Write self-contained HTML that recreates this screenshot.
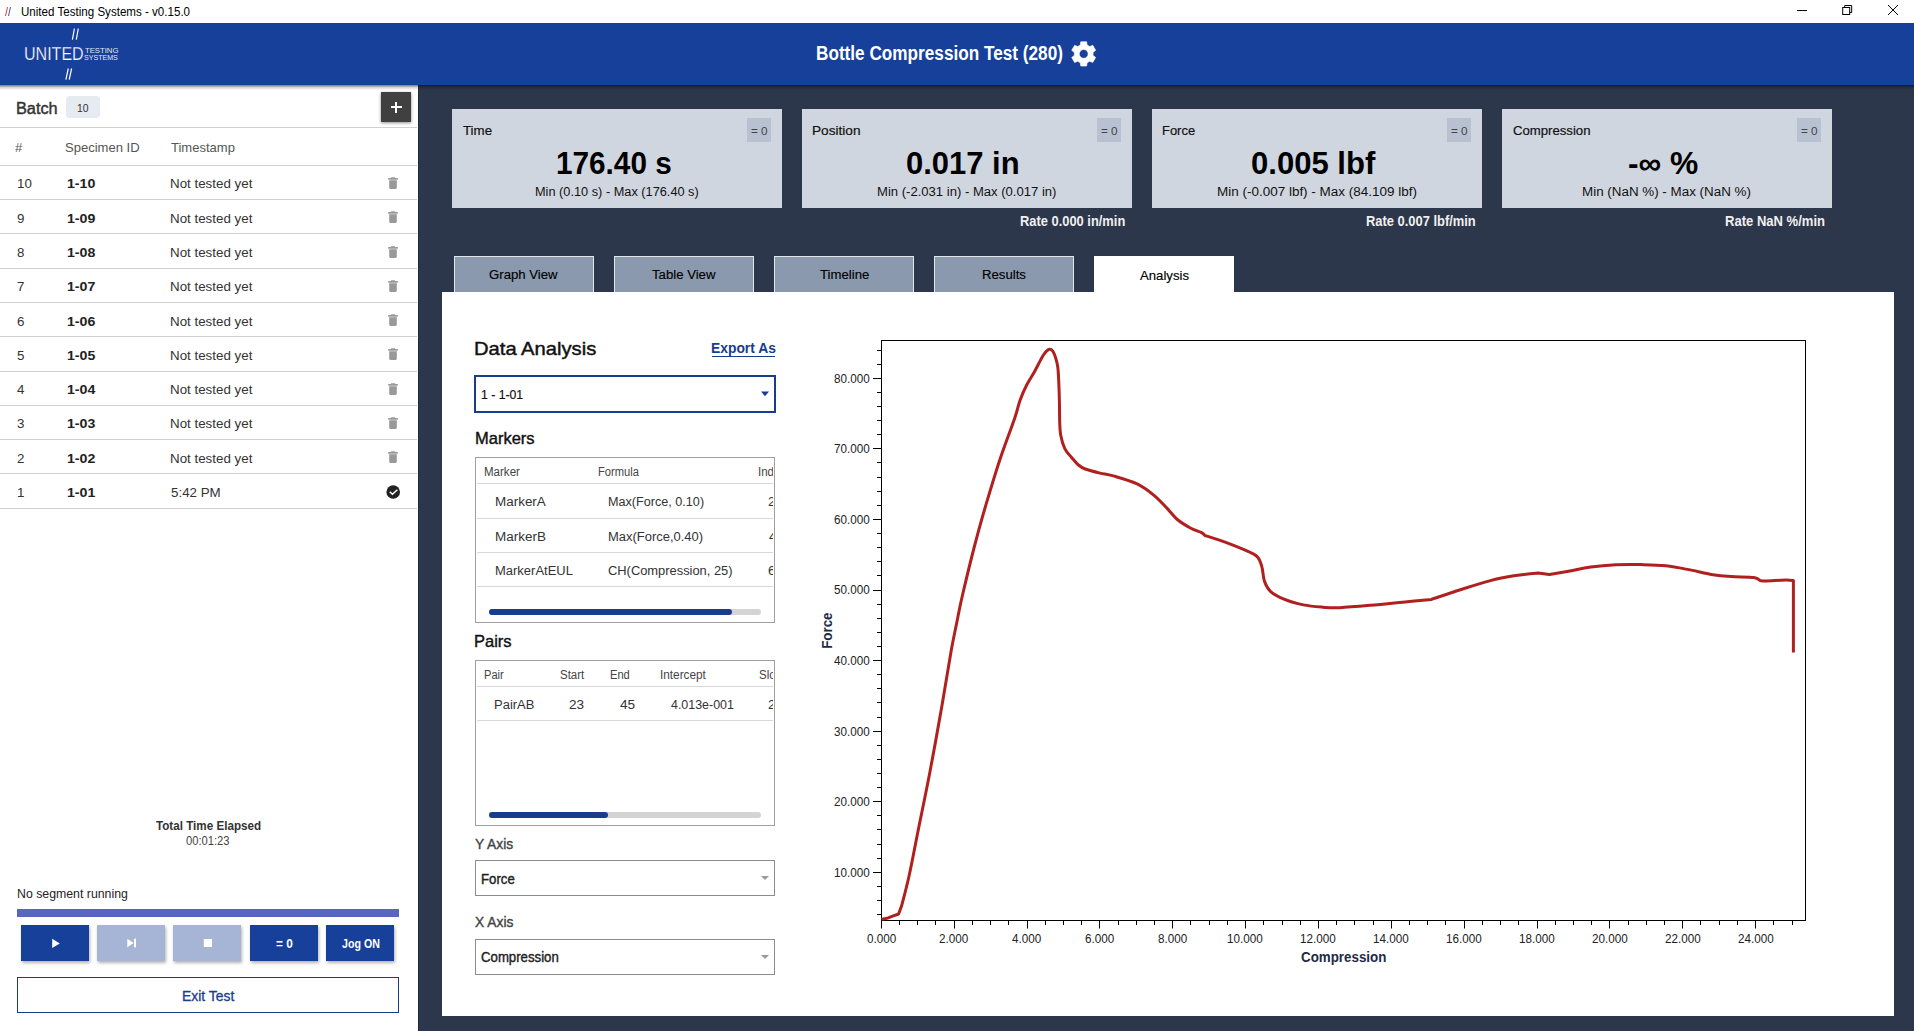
<!DOCTYPE html>
<html><head><meta charset="utf-8"><style>
html,body{margin:0;padding:0}
body{width:1914px;height:1031px;overflow:hidden;position:relative;background:#2d374b;font-family:"Liberation Sans",sans-serif}
.r{position:absolute}
.t{position:absolute;white-space:nowrap;transform-origin:0 0}
</style></head><body>
<div class="r" style="left:0px;top:0px;width:1914px;height:23px;background:#fff"></div>
<div class="r" style="left:0px;top:85px;width:418px;height:946px;background:#fff"></div>
<div class="r" style="left:418px;top:85px;width:1px;height:946px;background:#222a3b"></div>
<div class="r" style="left:0px;top:23px;width:1914px;height:62px;background:#17409a;z-index:2"></div>
<div class="r" style="left:0px;top:85px;width:1914px;height:5px;background:linear-gradient(rgba(0,0,0,.55),rgba(0,0,0,.18) 45%,rgba(0,0,0,0));z-index:2"></div>
<div class="t" style="left:20.53px;top:4.95px;font-size:13.52px;line-height:13.52px;font-weight:400;color:#000;transform:scaleX(0.8567);">United Testing Systems - v0.15.0</div>
<div class="t" style="left:815.68px;top:43.76px;font-size:19.77px;line-height:19.77px;font-weight:700;color:#fff;transform:scaleX(0.8692);z-index:3">Bottle Compression Test (280)</div>
<div class="t" style="left:16.20px;top:99.96px;font-size:17.30px;line-height:17.30px;font-weight:400;color:#333;transform:scaleX(0.9428);-webkit-text-stroke:0.45px #333;">Batch</div>
<div class="r" style="left:66px;top:96px;width:34px;height:22px;background:#e6eaf1;border-radius:4px"></div>
<div class="t" style="left:76.82px;top:102.67px;font-size:10.90px;line-height:10.90px;font-weight:400;color:#333;transform:scaleX(0.9540);">10</div>
<div class="r" style="left:381px;top:92px;width:30px;height:30px;background:#404040;box-shadow:0 1px 3px rgba(0,0,0,.45)"></div>
<div class="r" style="left:390.5px;top:106.2px;width:11px;height:1.6px;background:#fff"></div>
<div class="r" style="left:395.2px;top:101.5px;width:1.6px;height:11px;background:#fff"></div>
<div class="r" style="left:0px;top:127px;width:417px;height:1px;background:#d0d0d0"></div>
<div class="t" style="left:15.03px;top:141.77px;font-size:12.79px;line-height:12.79px;font-weight:400;color:#555;transform:scaleX(1.0198);">#</div>
<div class="t" style="left:64.91px;top:141.77px;font-size:12.79px;line-height:12.79px;font-weight:400;color:#555;transform:scaleX(1.0198);">Specimen ID</div>
<div class="t" style="left:171.24px;top:141.77px;font-size:12.79px;line-height:12.79px;font-weight:400;color:#555;transform:scaleX(1.0198);">Timestamp</div>
<div class="r" style="left:0px;top:165px;width:417px;height:1px;background:#d0d0d0"></div>
<div class="t" style="left:16.50px;top:177.40px;font-size:13.23px;line-height:13.23px;font-weight:400;color:#333;transform:scaleX(1.0097);">10</div>
<div class="t" style="left:66.85px;top:177.40px;font-size:13.23px;line-height:13.23px;font-weight:700;color:#222;transform:scaleX(1.0704);">1-10</div>
<div class="t" style="left:170.43px;top:177.40px;font-size:13.23px;line-height:13.23px;font-weight:400;color:#333;transform:scaleX(1.0097);">Not tested yet</div>
<div class="r" style="left:0px;top:199px;width:417px;height:1px;background:#d0d0d0"></div>
<div class="t" style="left:16.90px;top:211.69px;font-size:13.23px;line-height:13.23px;font-weight:400;color:#333;transform:scaleX(1.0097);">9</div>
<div class="t" style="left:66.85px;top:211.69px;font-size:13.23px;line-height:13.23px;font-weight:700;color:#222;transform:scaleX(1.0704);">1-09</div>
<div class="t" style="left:170.43px;top:211.69px;font-size:13.23px;line-height:13.23px;font-weight:400;color:#333;transform:scaleX(1.0097);">Not tested yet</div>
<div class="r" style="left:0px;top:233px;width:417px;height:1px;background:#d0d0d0"></div>
<div class="t" style="left:16.90px;top:245.98px;font-size:13.23px;line-height:13.23px;font-weight:400;color:#333;transform:scaleX(1.0097);">8</div>
<div class="t" style="left:66.85px;top:245.98px;font-size:13.23px;line-height:13.23px;font-weight:700;color:#222;transform:scaleX(1.0704);">1-08</div>
<div class="t" style="left:170.43px;top:245.98px;font-size:13.23px;line-height:13.23px;font-weight:400;color:#333;transform:scaleX(1.0097);">Not tested yet</div>
<div class="r" style="left:0px;top:268px;width:417px;height:1px;background:#d0d0d0"></div>
<div class="t" style="left:16.83px;top:280.27px;font-size:13.23px;line-height:13.23px;font-weight:400;color:#333;transform:scaleX(1.0097);">7</div>
<div class="t" style="left:66.85px;top:280.27px;font-size:13.23px;line-height:13.23px;font-weight:700;color:#222;transform:scaleX(1.0704);">1-07</div>
<div class="t" style="left:170.43px;top:280.27px;font-size:13.23px;line-height:13.23px;font-weight:400;color:#333;transform:scaleX(1.0097);">Not tested yet</div>
<div class="r" style="left:0px;top:302px;width:417px;height:1px;background:#d0d0d0"></div>
<div class="t" style="left:16.83px;top:314.56px;font-size:13.23px;line-height:13.23px;font-weight:400;color:#333;transform:scaleX(1.0097);">6</div>
<div class="t" style="left:66.85px;top:314.56px;font-size:13.23px;line-height:13.23px;font-weight:700;color:#222;transform:scaleX(1.0704);">1-06</div>
<div class="t" style="left:170.43px;top:314.56px;font-size:13.23px;line-height:13.23px;font-weight:400;color:#333;transform:scaleX(1.0097);">Not tested yet</div>
<div class="r" style="left:0px;top:336px;width:417px;height:1px;background:#d0d0d0"></div>
<div class="t" style="left:16.97px;top:348.85px;font-size:13.23px;line-height:13.23px;font-weight:400;color:#333;transform:scaleX(1.0097);">5</div>
<div class="t" style="left:66.85px;top:348.85px;font-size:13.23px;line-height:13.23px;font-weight:700;color:#222;transform:scaleX(1.0704);">1-05</div>
<div class="t" style="left:170.43px;top:348.85px;font-size:13.23px;line-height:13.23px;font-weight:400;color:#333;transform:scaleX(1.0097);">Not tested yet</div>
<div class="r" style="left:0px;top:371px;width:417px;height:1px;background:#d0d0d0"></div>
<div class="t" style="left:17.23px;top:383.14px;font-size:13.23px;line-height:13.23px;font-weight:400;color:#333;transform:scaleX(1.0097);">4</div>
<div class="t" style="left:66.85px;top:383.14px;font-size:13.23px;line-height:13.23px;font-weight:700;color:#222;transform:scaleX(1.0704);">1-04</div>
<div class="t" style="left:170.43px;top:383.14px;font-size:13.23px;line-height:13.23px;font-weight:400;color:#333;transform:scaleX(1.0097);">Not tested yet</div>
<div class="r" style="left:0px;top:405px;width:417px;height:1px;background:#d0d0d0"></div>
<div class="t" style="left:16.97px;top:417.43px;font-size:13.23px;line-height:13.23px;font-weight:400;color:#333;transform:scaleX(1.0097);">3</div>
<div class="t" style="left:66.85px;top:417.43px;font-size:13.23px;line-height:13.23px;font-weight:700;color:#222;transform:scaleX(1.0704);">1-03</div>
<div class="t" style="left:170.43px;top:417.43px;font-size:13.23px;line-height:13.23px;font-weight:400;color:#333;transform:scaleX(1.0097);">Not tested yet</div>
<div class="r" style="left:0px;top:439px;width:417px;height:1px;background:#d0d0d0"></div>
<div class="t" style="left:16.83px;top:451.72px;font-size:13.23px;line-height:13.23px;font-weight:400;color:#333;transform:scaleX(1.0097);">2</div>
<div class="t" style="left:66.85px;top:451.72px;font-size:13.23px;line-height:13.23px;font-weight:700;color:#222;transform:scaleX(1.0704);">1-02</div>
<div class="t" style="left:170.43px;top:451.72px;font-size:13.23px;line-height:13.23px;font-weight:400;color:#333;transform:scaleX(1.0097);">Not tested yet</div>
<div class="r" style="left:0px;top:473px;width:417px;height:1px;background:#d0d0d0"></div>
<div class="t" style="left:16.50px;top:486.01px;font-size:13.23px;line-height:13.23px;font-weight:400;color:#333;transform:scaleX(1.0097);">1</div>
<div class="t" style="left:66.85px;top:486.01px;font-size:13.23px;line-height:13.23px;font-weight:700;color:#222;transform:scaleX(1.0704);">1-01</div>
<div class="t" style="left:170.97px;top:486.01px;font-size:13.23px;line-height:13.23px;font-weight:400;color:#333;transform:scaleX(1.0097);">5:42 PM</div>
<div class="r" style="left:0px;top:508px;width:417px;height:1px;background:#d0d0d0"></div>
<svg class="r" style="left:386px;top:175.00px" width="14" height="16" viewBox="0 0 14 16"><path d="M2.2 3.1h9.6v1.6H2.2z M5 2.3h4v1H5z" fill="#999"/><path d="M3.2 5.2h7.6v7.6a1.1 1.1 0 0 1-1.1 1.1H4.3a1.1 1.1 0 0 1-1.1-1.1z" fill="#999"/></svg>
<svg class="r" style="left:386px;top:209.29px" width="14" height="16" viewBox="0 0 14 16"><path d="M2.2 3.1h9.6v1.6H2.2z M5 2.3h4v1H5z" fill="#999"/><path d="M3.2 5.2h7.6v7.6a1.1 1.1 0 0 1-1.1 1.1H4.3a1.1 1.1 0 0 1-1.1-1.1z" fill="#999"/></svg>
<svg class="r" style="left:386px;top:243.58px" width="14" height="16" viewBox="0 0 14 16"><path d="M2.2 3.1h9.6v1.6H2.2z M5 2.3h4v1H5z" fill="#999"/><path d="M3.2 5.2h7.6v7.6a1.1 1.1 0 0 1-1.1 1.1H4.3a1.1 1.1 0 0 1-1.1-1.1z" fill="#999"/></svg>
<svg class="r" style="left:386px;top:277.87px" width="14" height="16" viewBox="0 0 14 16"><path d="M2.2 3.1h9.6v1.6H2.2z M5 2.3h4v1H5z" fill="#999"/><path d="M3.2 5.2h7.6v7.6a1.1 1.1 0 0 1-1.1 1.1H4.3a1.1 1.1 0 0 1-1.1-1.1z" fill="#999"/></svg>
<svg class="r" style="left:386px;top:312.16px" width="14" height="16" viewBox="0 0 14 16"><path d="M2.2 3.1h9.6v1.6H2.2z M5 2.3h4v1H5z" fill="#999"/><path d="M3.2 5.2h7.6v7.6a1.1 1.1 0 0 1-1.1 1.1H4.3a1.1 1.1 0 0 1-1.1-1.1z" fill="#999"/></svg>
<svg class="r" style="left:386px;top:346.45px" width="14" height="16" viewBox="0 0 14 16"><path d="M2.2 3.1h9.6v1.6H2.2z M5 2.3h4v1H5z" fill="#999"/><path d="M3.2 5.2h7.6v7.6a1.1 1.1 0 0 1-1.1 1.1H4.3a1.1 1.1 0 0 1-1.1-1.1z" fill="#999"/></svg>
<svg class="r" style="left:386px;top:380.74px" width="14" height="16" viewBox="0 0 14 16"><path d="M2.2 3.1h9.6v1.6H2.2z M5 2.3h4v1H5z" fill="#999"/><path d="M3.2 5.2h7.6v7.6a1.1 1.1 0 0 1-1.1 1.1H4.3a1.1 1.1 0 0 1-1.1-1.1z" fill="#999"/></svg>
<svg class="r" style="left:386px;top:415.03px" width="14" height="16" viewBox="0 0 14 16"><path d="M2.2 3.1h9.6v1.6H2.2z M5 2.3h4v1H5z" fill="#999"/><path d="M3.2 5.2h7.6v7.6a1.1 1.1 0 0 1-1.1 1.1H4.3a1.1 1.1 0 0 1-1.1-1.1z" fill="#999"/></svg>
<svg class="r" style="left:386px;top:449.32px" width="14" height="16" viewBox="0 0 14 16"><path d="M2.2 3.1h9.6v1.6H2.2z M5 2.3h4v1H5z" fill="#999"/><path d="M3.2 5.2h7.6v7.6a1.1 1.1 0 0 1-1.1 1.1H4.3a1.1 1.1 0 0 1-1.1-1.1z" fill="#999"/></svg>
<svg class="r" style="left:386px;top:484.11px" width="15" height="15" viewBox="0 0 15 15"><circle cx="7.2" cy="8" r="6.8" fill="#222"/><path d="M3.8 7.8l2.6 2.4 5-4.4" stroke="#fff" stroke-width="1.5" fill="none"/></svg>
<div class="t" style="left:155.78px;top:818.82px;font-size:13.08px;line-height:13.08px;font-weight:700;color:#333;transform:scaleX(0.8905);">Total Time Elapsed</div>
<div class="t" style="left:185.85px;top:835.24px;font-size:12.35px;line-height:12.35px;font-weight:400;color:#444;transform:scaleX(0.9050);">00:01:23</div>
<div class="t" style="left:16.51px;top:887.02px;font-size:13.08px;line-height:13.08px;font-weight:400;color:#222;transform:scaleX(0.9413);">No segment running</div>
<div class="r" style="left:17px;top:909px;width:382px;height:8px;background:#5866c2"></div>
<div class="r" style="left:21px;top:925px;width:68.3px;height:35.7px;background:#17409a;box-shadow:1px 2px 3px rgba(0,0,0,.3)"></div>
<div class="r" style="left:97px;top:925px;width:68.3px;height:35.7px;background:#a6b4d6;box-shadow:1px 2px 3px rgba(0,0,0,.3)"></div>
<div class="r" style="left:173px;top:925px;width:68.3px;height:35.7px;background:#a6b4d6;box-shadow:1px 2px 3px rgba(0,0,0,.3)"></div>
<div class="r" style="left:250px;top:925px;width:68.3px;height:35.7px;background:#17409a;box-shadow:1px 2px 3px rgba(0,0,0,.3)"></div>
<div class="r" style="left:326px;top:925px;width:68.3px;height:35.7px;background:#17409a;box-shadow:1px 2px 3px rgba(0,0,0,.3)"></div>
<svg class="r" style="left:0;top:0;z-index:1" width="420" height="1031"><path d="M52.2 938.7L59.8 943.4L52.2 948z" fill="#fff"/><path d="M127.3 938.7L133.6 943L127.3 947.3z" fill="#fff"/><rect x="134" y="938.7" width="2" height="8.6" fill="#fff"/><rect x="203.8" y="939" width="8.2" height="8" fill="#fff"/></svg>
<div class="t" style="left:275.93px;top:937.42px;font-size:13.08px;line-height:13.08px;font-weight:700;color:#fff;transform:scaleX(0.9047);z-index:1">= 0</div>
<div class="t" style="left:341.94px;top:937.42px;font-size:13.08px;line-height:13.08px;font-weight:700;color:#fff;transform:scaleX(0.8139);z-index:1">Jog ON</div>
<div class="r" style="left:17px;top:977px;width:381.8px;height:35.5px;box-sizing:border-box;border:1.5px solid #1a3c8c"></div>
<div class="t" style="left:181.74px;top:989.14px;font-size:14.24px;line-height:14.24px;font-weight:400;color:#1a3c8c;transform:scaleX(0.9762);-webkit-text-stroke:0.3px #1a3c8c">Exit Test</div>
<div class="r" style="left:452px;top:109px;width:330px;height:99px;background:#d0d6df"></div>
<div class="r" style="left:747px;top:118px;width:24px;height:24px;background:#b8c1d2"></div>
<div class="t" style="left:463.23px;top:123.88px;font-size:13.37px;line-height:13.37px;font-weight:400;color:#111;transform:scaleX(0.9947);-webkit-text-stroke:0.20px #111;">Time</div>
<div class="t" style="left:750.71px;top:125.57px;font-size:10.90px;line-height:10.90px;font-weight:400;color:#444;transform:scaleX(1.0760);">= 0</div>
<div class="t" style="left:555.72px;top:149.09px;font-size:30.96px;line-height:30.96px;font-weight:700;color:#000;transform:scaleX(0.9605);">176.40 s</div>
<div class="t" style="left:534.98px;top:184.73px;font-size:13.66px;line-height:13.66px;font-weight:400;color:#111;transform:scaleX(0.9340);">Min (0.10 s) - Max (176.40 s)</div>
<div class="r" style="left:802px;top:109px;width:330px;height:99px;background:#d0d6df"></div>
<div class="r" style="left:1097px;top:118px;width:24px;height:24px;background:#b8c1d2"></div>
<div class="t" style="left:812.41px;top:123.88px;font-size:13.37px;line-height:13.37px;font-weight:400;color:#111;transform:scaleX(1.0198);-webkit-text-stroke:0.20px #111;">Position</div>
<div class="t" style="left:1100.71px;top:125.57px;font-size:10.90px;line-height:10.90px;font-weight:400;color:#444;transform:scaleX(1.0760);">= 0</div>
<div class="t" style="left:906.26px;top:149.09px;font-size:30.96px;line-height:30.96px;font-weight:700;color:#000;transform:scaleX(0.9998);">0.017 in</div>
<div class="t" style="left:876.95px;top:184.73px;font-size:13.66px;line-height:13.66px;font-weight:400;color:#111;transform:scaleX(0.9574);">Min (-2.031 in) - Max (0.017 in)</div>
<div class="t" style="left:1020.16px;top:214.09px;font-size:14.53px;line-height:14.53px;font-weight:700;color:#f0f0f0;transform:scaleX(0.8877);">Rate 0.000 in/min</div>
<div class="r" style="left:1152px;top:109px;width:330px;height:99px;background:#d0d6df"></div>
<div class="r" style="left:1447px;top:118px;width:24px;height:24px;background:#b8c1d2"></div>
<div class="t" style="left:1162.46px;top:123.88px;font-size:13.37px;line-height:13.37px;font-weight:400;color:#111;transform:scaleX(0.9694);-webkit-text-stroke:0.20px #111;">Force</div>
<div class="t" style="left:1450.71px;top:125.57px;font-size:10.90px;line-height:10.90px;font-weight:400;color:#444;transform:scaleX(1.0760);">= 0</div>
<div class="t" style="left:1250.66px;top:149.09px;font-size:30.96px;line-height:30.96px;font-weight:700;color:#000;transform:scaleX(1.0036);">0.005 lbf</div>
<div class="t" style="left:1216.92px;top:184.73px;font-size:13.66px;line-height:13.66px;font-weight:400;color:#111;transform:scaleX(0.9867);">Min (-0.007 lbf) - Max (84.109 lbf)</div>
<div class="t" style="left:1365.76px;top:214.09px;font-size:14.53px;line-height:14.53px;font-weight:700;color:#f0f0f0;transform:scaleX(0.8889);">Rate 0.007 lbf/min</div>
<div class="r" style="left:1502px;top:109px;width:330px;height:99px;background:#d0d6df"></div>
<div class="r" style="left:1797px;top:118px;width:24px;height:24px;background:#b8c1d2"></div>
<div class="t" style="left:1512.64px;top:123.88px;font-size:13.37px;line-height:13.37px;font-weight:400;color:#111;transform:scaleX(0.9842);-webkit-text-stroke:0.20px #111;">Compression</div>
<div class="t" style="left:1800.71px;top:125.57px;font-size:10.90px;line-height:10.90px;font-weight:400;color:#444;transform:scaleX(1.0760);">= 0</div>
<div class="t" style="left:1627.73px;top:149.09px;font-size:30.96px;line-height:30.96px;font-weight:700;color:#000;transform:scaleX(1.0261);">-∞ %</div>
<div class="t" style="left:1582.33px;top:184.73px;font-size:13.66px;line-height:13.66px;font-weight:400;color:#111;transform:scaleX(0.9808);">Min (NaN %) - Max (NaN %)</div>
<div class="t" style="left:1725.45px;top:214.09px;font-size:14.53px;line-height:14.53px;font-weight:700;color:#f0f0f0;transform:scaleX(0.8982);">Rate NaN %/min</div>
<div class="r" style="left:442px;top:292px;width:1452px;height:724px;background:#fff"></div>
<div class="r" style="left:454px;top:256px;width:140px;height:36px;box-sizing:border-box;background:#8a99ae;border:1px solid #e4e6ea;border-bottom:none"></div>
<div class="t" style="left:489.34px;top:267.53px;font-size:13.66px;line-height:13.66px;font-weight:400;color:#000;transform:scaleX(0.9645);-webkit-text-stroke:0.15px #000;">Graph View</div>
<div class="r" style="left:614px;top:256px;width:140px;height:36px;box-sizing:border-box;background:#8a99ae;border:1px solid #e4e6ea;border-bottom:none"></div>
<div class="t" style="left:652.11px;top:267.53px;font-size:13.66px;line-height:13.66px;font-weight:400;color:#000;transform:scaleX(0.9645);-webkit-text-stroke:0.15px #000;">Table View</div>
<div class="r" style="left:774px;top:256px;width:140px;height:36px;box-sizing:border-box;background:#8a99ae;border:1px solid #e4e6ea;border-bottom:none"></div>
<div class="t" style="left:819.52px;top:267.53px;font-size:13.66px;line-height:13.66px;font-weight:400;color:#000;transform:scaleX(0.9645);-webkit-text-stroke:0.15px #000;">Timeline</div>
<div class="r" style="left:934px;top:256px;width:140px;height:36px;box-sizing:border-box;background:#8a99ae;border:1px solid #e4e6ea;border-bottom:none"></div>
<div class="t" style="left:981.73px;top:267.53px;font-size:13.66px;line-height:13.66px;font-weight:400;color:#000;transform:scaleX(0.9645);-webkit-text-stroke:0.15px #000;">Results</div>
<div class="r" style="left:1094px;top:256px;width:140px;height:37px;background:#fff"></div>
<div class="t" style="left:1139.69px;top:268.63px;font-size:13.66px;line-height:13.66px;font-weight:400;color:#000;transform:scaleX(0.9645);-webkit-text-stroke:0.15px #000;">Analysis</div>
<div class="t" style="left:474.39px;top:338.58px;font-size:19.04px;line-height:19.04px;font-weight:400;color:#111;transform:scaleX(1.0601);-webkit-text-stroke:0.45px #111;">Data Analysis</div>
<div class="t" style="left:710.60px;top:340.74px;font-size:14.24px;line-height:14.24px;font-weight:700;color:#1a3c8c;transform:scaleX(0.9734);">Export As</div>
<div class="r" style="left:711.5px;top:355.5px;width:63.5px;height:1.3px;background:#1a3c8c"></div>
<div class="r" style="left:474px;top:375px;width:302px;height:38px;box-sizing:border-box;border:2px solid #1a3c8c"></div>
<div class="t" style="left:480.78px;top:387.85px;font-size:13.52px;line-height:13.52px;font-weight:400;color:#111;transform:scaleX(0.9055);-webkit-text-stroke:0.20px #111;">1 - 1-01</div>
<svg class="r" style="left:760px;top:390px" width="10" height="8"><path d="M1 1.4h8L5 6.3z" fill="#1a3c8c"/></svg>
<div class="t" style="left:474.58px;top:431.27px;font-size:16.57px;line-height:16.57px;font-weight:400;color:#111;transform:scaleX(0.9964);-webkit-text-stroke:0.40px #111;">Markers</div>
<div class="r" style="left:475px;top:457px;width:300px;height:166px;box-sizing:border-box;border:1px solid #a0a0a0"></div>
<div class="t" style="left:484.48px;top:465.86px;font-size:12.21px;line-height:12.21px;font-weight:400;color:#444;transform:scaleX(0.9454);">Marker</div>
<div class="t" style="left:597.91px;top:465.86px;font-size:12.21px;line-height:12.21px;font-weight:400;color:#444;transform:scaleX(0.9161);">Formula</div>
<div class="t" style="left:757.76px;top:465.86px;font-size:12.21px;line-height:12.21px;font-weight:400;color:#444;transform:scaleX(0.9454);">Ind</div>
<div class="t" style="left:494.52px;top:494.85px;font-size:13.52px;line-height:13.52px;font-weight:400;color:#333;transform:scaleX(0.9951);">MarkerA</div>
<div class="t" style="left:607.99px;top:494.85px;font-size:13.52px;line-height:13.52px;font-weight:400;color:#333;transform:scaleX(0.9339);">Max(Force, 0.10)</div>
<div class="t" style="left:768.33px;top:494.85px;font-size:13.52px;line-height:13.52px;font-weight:400;color:#333;transform:scaleX(0.9951);">2</div>
<div class="t" style="left:494.52px;top:529.55px;font-size:13.52px;line-height:13.52px;font-weight:400;color:#333;transform:scaleX(0.9965);">MarkerB</div>
<div class="t" style="left:607.96px;top:529.55px;font-size:13.52px;line-height:13.52px;font-weight:400;color:#333;transform:scaleX(0.9593);">Max(Force,0.40)</div>
<div class="t" style="left:768.73px;top:529.55px;font-size:13.52px;line-height:13.52px;font-weight:400;color:#333;transform:scaleX(0.9951);">4</div>
<div class="t" style="left:494.56px;top:563.55px;font-size:13.52px;line-height:13.52px;font-weight:400;color:#333;transform:scaleX(0.9608);">MarkerAtEUL</div>
<div class="t" style="left:608.36px;top:563.55px;font-size:13.52px;line-height:13.52px;font-weight:400;color:#333;transform:scaleX(0.9531);">CH(Compression, 25)</div>
<div class="t" style="left:768.33px;top:563.55px;font-size:13.52px;line-height:13.52px;font-weight:400;color:#333;transform:scaleX(0.9951);">6</div>
<div class="r" style="left:477px;top:483px;width:296px;height:1px;background:#d8d8d8"></div>
<div class="r" style="left:477px;top:518px;width:296px;height:1px;background:#d8d8d8"></div>
<div class="r" style="left:477px;top:552px;width:296px;height:1px;background:#d8d8d8"></div>
<div class="r" style="left:477px;top:586px;width:296px;height:1px;background:#d8d8d8"></div>
<div class="r" style="left:489px;top:609px;width:272px;height:6px;background:#d4d4d4;border-radius:3px"></div>
<div class="r" style="left:489px;top:609px;width:243px;height:6px;background:#1a3c8c;border-radius:3px"></div>
<div class="r" style="left:773px;top:458px;width:20px;height:164px;background:#fff;z-index:1"></div>
<div class="r" style="left:774px;top:457px;width:1px;height:166px;background:#a0a0a0;z-index:1"></div>
<div class="t" style="left:474.38px;top:634.17px;font-size:16.57px;line-height:16.57px;font-weight:400;color:#111;transform:scaleX(0.9964);-webkit-text-stroke:0.40px #111;">Pairs</div>
<div class="r" style="left:475px;top:660px;width:300px;height:166px;box-sizing:border-box;border:1px solid #a0a0a0"></div>
<div class="t" style="left:484.11px;top:668.56px;font-size:12.21px;line-height:12.21px;font-weight:400;color:#444;transform:scaleX(0.9068);">Pair</div>
<div class="t" style="left:559.68px;top:668.56px;font-size:12.21px;line-height:12.21px;font-weight:400;color:#444;transform:scaleX(0.9423);">Start</div>
<div class="t" style="left:609.51px;top:668.56px;font-size:12.21px;line-height:12.21px;font-weight:400;color:#444;transform:scaleX(0.9117);">End</div>
<div class="t" style="left:660.34px;top:668.56px;font-size:12.21px;line-height:12.21px;font-weight:400;color:#444;transform:scaleX(0.9647);">Intercept</div>
<div class="t" style="left:758.58px;top:668.56px;font-size:12.21px;line-height:12.21px;font-weight:400;color:#444;transform:scaleX(0.9454);">Slo</div>
<div class="t" style="left:494.26px;top:698.15px;font-size:13.52px;line-height:13.52px;font-weight:400;color:#333;transform:scaleX(0.9607);">PairAB</div>
<div class="t" style="left:569.32px;top:698.15px;font-size:13.52px;line-height:13.52px;font-weight:400;color:#333;transform:scaleX(1.0081);">23</div>
<div class="t" style="left:619.93px;top:698.15px;font-size:13.52px;line-height:13.52px;font-weight:400;color:#333;transform:scaleX(1.0075);">45</div>
<div class="t" style="left:670.95px;top:698.15px;font-size:13.52px;line-height:13.52px;font-weight:400;color:#333;transform:scaleX(0.9197);">4.013e-001</div>
<div class="t" style="left:768.33px;top:698.15px;font-size:13.52px;line-height:13.52px;font-weight:400;color:#333;transform:scaleX(0.9951);">2</div>
<div class="r" style="left:477px;top:686px;width:296px;height:1px;background:#d8d8d8"></div>
<div class="r" style="left:477px;top:720px;width:296px;height:1px;background:#d8d8d8"></div>
<div class="r" style="left:489px;top:811.5px;width:272px;height:6px;background:#d4d4d4;border-radius:3px"></div>
<div class="r" style="left:489px;top:811.5px;width:119px;height:6px;background:#1a3c8c;border-radius:3px"></div>
<div class="r" style="left:773px;top:661px;width:20px;height:164px;background:#fff;z-index:1"></div>
<div class="r" style="left:774px;top:660px;width:1px;height:166px;background:#a0a0a0;z-index:1"></div>
<div class="t" style="left:475.35px;top:836.28px;font-size:15.26px;line-height:15.26px;font-weight:400;color:#444;transform:scaleX(0.9052);-webkit-text-stroke:0.40px #444;">Y Axis</div>
<div class="r" style="left:475px;top:860px;width:300px;height:35.5px;box-sizing:border-box;border:1px solid #8c8c8c"></div>
<div class="t" style="left:480.94px;top:872.04px;font-size:14.24px;line-height:14.24px;font-weight:400;color:#222;transform:scaleX(0.9274);-webkit-text-stroke:0.40px #222;">Force</div>
<svg class="r" style="left:760px;top:875px" width="10" height="6"><path d="M1 1h8L5 5z" fill="#9a9a9a"/></svg>
<div class="t" style="left:475.35px;top:913.78px;font-size:15.26px;line-height:15.26px;font-weight:400;color:#444;transform:scaleX(0.9052);-webkit-text-stroke:0.40px #444;">X Axis</div>
<div class="r" style="left:475px;top:939px;width:300px;height:35.5px;box-sizing:border-box;border:1px solid #8c8c8c"></div>
<div class="t" style="left:481.34px;top:950.24px;font-size:14.24px;line-height:14.24px;font-weight:400;color:#222;transform:scaleX(0.9274);-webkit-text-stroke:0.40px #222;">Compression</div>
<svg class="r" style="left:760px;top:954px" width="10" height="6"><path d="M1 1h8L5 5z" fill="#9a9a9a"/></svg>
<svg class="r" style="left:0;top:0" width="1914" height="1031" viewBox="0 0 1914 1031"><path d="M881.5 340V920.5M881 340.5H1805.5M1805.5 340V920.5M881 920.5H1806" stroke="#000" stroke-width="1" fill="none"/><path d="M877 914.5H881 M877 900.5H881 M877 886.5H881 M873 872.5H881 M877 858.5H881 M877 844.5H881 M877 829.5H881 M877 815.5H881 M873 801.5H881 M877 787.5H881 M877 773.5H881 M877 759.5H881 M877 745.5H881 M873 731.5H881 M877 717.5H881 M877 702.5H881 M877 688.5H881 M877 674.5H881 M873 660.5H881 M877 646.5H881 M877 632.5H881 M877 618.5H881 M877 604.5H881 M873 590.5H881 M877 575.5H881 M877 561.5H881 M877 547.5H881 M877 533.5H881 M873 519.5H881 M877 505.5H881 M877 491.5H881 M877 477.5H881 M877 462.5H881 M873 448.5H881 M877 434.5H881 M877 420.5H881 M877 406.5H881 M877 392.5H881 M873 378.5H881 M877 364.5H881 M877 350.5H881 M881.5 921V928.5 M899.5 921V925 M917.5 921V925 M935.5 921V925 M954.5 921V928.5 M972.5 921V925 M990.5 921V925 M1008.5 921V925 M1027.5 921V928.5 M1045.5 921V925 M1063.5 921V925 M1081.5 921V925 M1099.5 921V928.5 M1118.5 921V925 M1136.5 921V925 M1154.5 921V925 M1172.5 921V928.5 M1190.5 921V925 M1209.5 921V925 M1227.5 921V925 M1245.5 921V928.5 M1263.5 921V925 M1282.5 921V925 M1300.5 921V925 M1318.5 921V928.5 M1336.5 921V925 M1354.5 921V925 M1373.5 921V925 M1391.5 921V928.5 M1409.5 921V925 M1427.5 921V925 M1445.5 921V925 M1464.5 921V928.5 M1482.5 921V925 M1500.5 921V925 M1518.5 921V925 M1537.5 921V928.5 M1555.5 921V925 M1573.5 921V925 M1591.5 921V925 M1609.5 921V928.5 M1628.5 921V925 M1646.5 921V925 M1664.5 921V925 M1682.5 921V928.5 M1700.5 921V925 M1719.5 921V925 M1737.5 921V925 M1755.5 921V928.5 M1773.5 921V925 M1792.5 921V925" stroke="#000" stroke-width="1" fill="none"/><path d="M881.4 919.4 C882.5 919.1 887.0 918.1 888.1 917.9 C889.9 917.2 896.9 914.6 898.6 914.0 C899.1 912.6 901.1 907.2 901.6 905.9 C902.9 900.9 906.4 888.3 909.1 875.8 C911.9 863.3 914.6 848.2 918.1 830.7 C921.6 813.2 926.2 791.6 930.2 770.5 C934.2 749.4 938.7 724.4 942.2 704.3 C945.7 684.2 948.8 664.1 951.3 650.1 C953.8 636.1 955.5 629.0 957.3 620.0 C959.1 611.0 959.5 608.0 962.3 596.0 C965.1 584.0 970.1 563.0 974.0 548.0 C977.9 533.0 981.2 520.8 985.6 506.0 C990.0 491.2 995.2 473.6 1000.1 459.0 C1005.0 444.4 1011.4 428.1 1014.7 418.3 C1018.0 408.5 1018.0 406.0 1020.0 400.4 C1022.0 394.8 1024.5 389.3 1026.8 384.8 C1029.1 380.3 1031.3 377.4 1033.6 373.3 C1035.9 369.2 1038.6 363.7 1040.4 360.4 C1042.2 357.1 1043.0 355.4 1044.4 353.6 C1045.8 351.8 1047.4 349.9 1048.8 349.5 C1050.2 349.1 1051.5 349.5 1052.6 350.9 C1053.7 352.3 1054.7 355.0 1055.6 357.7 C1056.5 360.4 1057.3 363.4 1057.8 367.2 C1058.3 371.0 1058.4 375.0 1058.7 380.7 C1059.0 386.4 1059.2 394.3 1059.4 401.1 C1059.6 407.9 1059.5 415.8 1059.7 421.5 C1059.9 427.2 1059.9 430.6 1060.7 435.1 C1061.5 439.6 1063.0 445.0 1064.8 448.7 C1066.6 452.4 1069.3 454.8 1071.6 457.5 C1073.9 460.2 1076.1 463.1 1078.4 465.0 C1080.7 466.9 1081.6 467.6 1085.2 469.0 C1088.8 470.4 1095.3 472.0 1100.0 473.1 C1104.7 474.2 1107.2 474.1 1113.3 475.9 C1119.4 477.7 1129.8 480.5 1136.6 483.7 C1143.4 486.9 1148.8 491.1 1154.0 495.3 C1159.2 499.5 1163.7 504.9 1167.6 508.9 C1171.5 512.9 1173.4 516.3 1177.3 519.5 C1181.2 522.7 1186.9 526.1 1190.9 528.3 C1195.0 530.5 1199.3 531.5 1201.6 532.7 C1203.9 533.9 1204.4 535.0 1204.9 535.5 C1208.4 536.6 1219.1 539.9 1225.8 542.4 C1232.5 544.9 1240.0 547.9 1245.2 550.2 C1250.4 552.5 1254.2 553.8 1256.9 556.4 C1259.7 559.0 1260.4 561.9 1261.7 566.1 C1263.0 570.3 1263.1 577.4 1264.6 581.6 C1266.0 585.8 1267.2 588.4 1270.4 591.3 C1273.6 594.2 1278.5 596.8 1284.0 599.1 C1289.5 601.4 1296.9 603.5 1303.4 604.9 C1309.9 606.2 1316.7 606.7 1322.8 607.2 C1328.9 607.7 1330.9 608.1 1340.0 607.7 C1349.1 607.3 1367.1 605.6 1377.6 604.7 C1388.0 603.8 1393.7 603.1 1402.7 602.2 C1411.7 601.3 1426.7 599.9 1431.5 599.4 C1436.3 597.8 1450.6 592.8 1460.4 589.7 C1470.2 586.6 1481.3 583.0 1490.5 580.6 C1499.7 578.2 1507.6 576.9 1515.5 575.6 C1523.4 574.3 1534.3 573.4 1538.1 572.9 C1540.0 573.2 1547.5 574.3 1549.4 574.6 C1552.1 574.1 1558.8 573.0 1565.7 571.8 C1572.6 570.5 1582.4 568.3 1590.8 567.1 C1599.2 565.9 1607.6 565.2 1615.9 564.8 C1624.2 564.4 1632.6 564.4 1640.9 564.6 C1649.2 564.8 1657.6 564.9 1666.0 565.8 C1674.4 566.7 1683.6 568.7 1691.1 570.1 C1698.6 571.5 1704.5 573.3 1711.2 574.4 C1717.9 575.5 1724.1 576.1 1731.2 576.6 C1738.3 577.1 1749.0 576.9 1753.8 577.6 C1758.6 578.3 1759.0 580.1 1760.1 580.6 C1761.1 580.6 1761.9 581.0 1766.3 580.9 C1770.7 580.8 1781.9 580.1 1786.4 580.1 C1790.9 580.1 1792.2 580.5 1793.4 580.6 C1793.4 592.6 1793.4 640.4 1793.4 652.4" stroke="#b0201f" stroke-width="3" fill="none" stroke-linejoin="round"/></svg>
<div class="t" style="left:834.42px;top:866.63px;font-size:12.65px;line-height:12.65px;font-weight:400;color:#222;transform:scaleX(0.9248);">10.000</div>
<div class="t" style="left:834.42px;top:796.07px;font-size:12.65px;line-height:12.65px;font-weight:400;color:#222;transform:scaleX(0.9248);">20.000</div>
<div class="t" style="left:834.42px;top:725.51px;font-size:12.65px;line-height:12.65px;font-weight:400;color:#222;transform:scaleX(0.9248);">30.000</div>
<div class="t" style="left:834.42px;top:654.95px;font-size:12.65px;line-height:12.65px;font-weight:400;color:#222;transform:scaleX(0.9248);">40.000</div>
<div class="t" style="left:834.42px;top:584.39px;font-size:12.65px;line-height:12.65px;font-weight:400;color:#222;transform:scaleX(0.9248);">50.000</div>
<div class="t" style="left:834.42px;top:513.83px;font-size:12.65px;line-height:12.65px;font-weight:400;color:#222;transform:scaleX(0.9248);">60.000</div>
<div class="t" style="left:834.42px;top:443.27px;font-size:12.65px;line-height:12.65px;font-weight:400;color:#222;transform:scaleX(0.9248);">70.000</div>
<div class="t" style="left:834.42px;top:372.71px;font-size:12.65px;line-height:12.65px;font-weight:400;color:#222;transform:scaleX(0.9248);">80.000</div>
<div class="t" style="left:866.65px;top:933.19px;font-size:12.65px;line-height:12.65px;font-weight:400;color:#222;transform:scaleX(0.9248);">0.000</div>
<div class="t" style="left:939.45px;top:933.19px;font-size:12.65px;line-height:12.65px;font-weight:400;color:#222;transform:scaleX(0.9248);">2.000</div>
<div class="t" style="left:1012.49px;top:933.19px;font-size:12.65px;line-height:12.65px;font-weight:400;color:#222;transform:scaleX(0.9248);">4.000</div>
<div class="t" style="left:1085.17px;top:933.19px;font-size:12.65px;line-height:12.65px;font-weight:400;color:#222;transform:scaleX(0.9248);">6.000</div>
<div class="t" style="left:1158.06px;top:933.19px;font-size:12.65px;line-height:12.65px;font-weight:400;color:#222;transform:scaleX(0.9248);">8.000</div>
<div class="t" style="left:1227.47px;top:933.19px;font-size:12.65px;line-height:12.65px;font-weight:400;color:#222;transform:scaleX(0.9248);">10.000</div>
<div class="t" style="left:1300.33px;top:933.19px;font-size:12.65px;line-height:12.65px;font-weight:400;color:#222;transform:scaleX(0.9248);">12.000</div>
<div class="t" style="left:1373.19px;top:933.19px;font-size:12.65px;line-height:12.65px;font-weight:400;color:#222;transform:scaleX(0.9248);">14.000</div>
<div class="t" style="left:1446.05px;top:933.19px;font-size:12.65px;line-height:12.65px;font-weight:400;color:#222;transform:scaleX(0.9248);">16.000</div>
<div class="t" style="left:1518.91px;top:933.19px;font-size:12.65px;line-height:12.65px;font-weight:400;color:#222;transform:scaleX(0.9248);">18.000</div>
<div class="t" style="left:1591.92px;top:933.19px;font-size:12.65px;line-height:12.65px;font-weight:400;color:#222;transform:scaleX(0.9248);">20.000</div>
<div class="t" style="left:1664.78px;top:933.19px;font-size:12.65px;line-height:12.65px;font-weight:400;color:#222;transform:scaleX(0.9248);">22.000</div>
<div class="t" style="left:1737.64px;top:933.19px;font-size:12.65px;line-height:12.65px;font-weight:400;color:#222;transform:scaleX(0.9248);">24.000</div>
<div class="t" style="left:1301.02px;top:949.84px;font-size:14.24px;line-height:14.24px;font-weight:700;color:#1e2a45;transform:scaleX(0.9387);">Compression</div>
<div class="t" style="left:819.55px;top:647.90px;font-size:14.83px;line-height:14.83px;font-weight:700;color:#1e2a45;transform-origin:0 0;transform:rotate(-90deg) scaleX(0.9011) translateX(-0.96px)">Force</div>
<svg class="r" style="left:0;top:0;z-index:3" width="1914" height="90"><path d="M1797 10.5h10" stroke="#000" stroke-width="1"/><rect x="1842.7" y="7.5" width="7" height="7" fill="none" stroke="#000" stroke-width="1"/><path d="M1844.7 7.5V5.5h7v7h-2" fill="none" stroke="#000" stroke-width="1"/><path d="M1888 5l10 10M1898 5l-10 10" stroke="#000" stroke-width="1"/><path d="M7.5 7L5.5 16" stroke="#e04040" stroke-width="1"/><path d="M10.5 7L8.5 16" stroke="#3060b0" stroke-width="1"/><path d="M74.4 28.5L72.4 39.7M78.3 28.5L76.3 39.7M68.3 68.5L65.9 79.6M71.6 68.5L69.2 79.6" stroke="#fff" stroke-width="1.2"/></svg>
<svg class="r" style="left:0;top:0;z-index:3" width="1200" height="90"><path fill="#fff" fill-rule="evenodd" stroke="#fff" stroke-width="0.6" stroke-linejoin="round" d="M1087.09 45.03 L1086.61 41.74 L1080.79 41.74 L1080.31 45.03 L1077.71 46.53 L1074.63 45.30 L1071.72 50.34 L1074.32 52.40 L1074.32 55.40 L1071.72 57.46 L1074.63 62.50 L1077.71 61.27 L1080.31 62.77 L1080.79 66.06 L1086.61 66.06 L1087.09 62.77 L1089.69 61.27 L1092.77 62.50 L1095.68 57.46 L1093.08 55.40 L1093.08 52.40 L1095.68 50.34 L1092.77 45.30 L1089.69 46.53Z M1088.10 53.90 A4.4 4.4 0 1 0 1079.30 53.90 A4.4 4.4 0 1 0 1088.10 53.90Z"/></svg>
<div class="t" style="left:24.10px;top:45.04px;font-size:18.02px;line-height:18.02px;font-weight:400;color:#fff;transform:scaleX(0.8893);z-index:3;-webkit-text-stroke:0.25px #17409a">UNITED</div>
<div class="t" style="left:85.05px;top:46.72px;font-size:7.41px;line-height:7.41px;font-weight:400;color:#e4e8f0;transform:scaleX(1.0404);z-index:3">TESTING</div>
<div class="t" style="left:84.38px;top:53.78px;font-size:7.70px;line-height:7.70px;font-weight:400;color:#e4e8f0;transform:scaleX(0.9199);z-index:3">SYSTEMS</div>
</body></html>
